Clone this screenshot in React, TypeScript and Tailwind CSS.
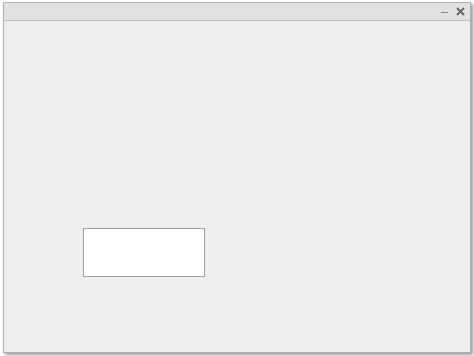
export default function App() {
  return (
    <div className="w-[474px] h-[356px] bg-white pl-[3px] pt-[2px] font-['Liberation_Sans',sans-serif]">
      <div className="flex flex-col w-[468px] h-[351px] border border-[#b0b0b0] bg-[#eeeeee] shadow-[2px_2px_3px_rgba(0,0,0,0.4)]">
        {/* Title bar */}
        <div className="flex items-center justify-end h-[18px] bg-[#e2e2e2] border-b border-[#bdbdbd] pr-[5px] gap-[8px]">
          <span className="block w-[7px] h-[1px] bg-[#888] mt-[1px]" />
          <svg width="9" height="9" viewBox="0 0 9 9" className="text-[#666]">
            <path d="M1 1 L8 8 M8 1 L1 8" stroke="currentColor" strokeWidth="2" />
          </svg>
        </div>
        {/* Body */}
        <div className="flex-1 pt-[207px] pl-[79px]">
          <div className="w-[122px] h-[49px] bg-white border border-[#a0a0a0]" />
        </div>
      </div>
    </div>
  )
}
